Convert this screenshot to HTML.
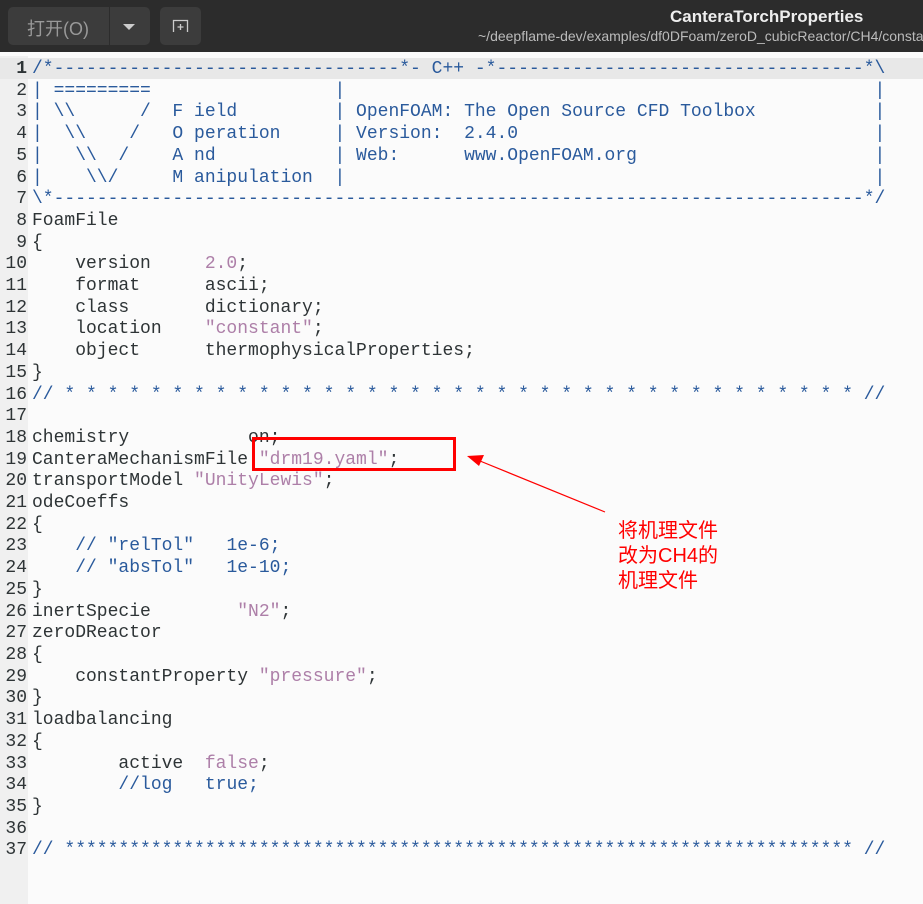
<!DOCTYPE html>
<html><head><meta charset="utf-8"><style>
body{margin:0;width:923px;height:904px;overflow:hidden;background:#fbfbfb;font-family:"Liberation Sans","Noto Sans CJK SC",sans-serif;position:relative}
.top{position:absolute;left:0;top:0;width:923px;height:52px;background:#2c2c2c}
.btn{position:absolute;top:7px;height:38px;background:#3c3c3c;border-radius:5px}
.gut{position:absolute;left:0;top:56px;width:28px;height:848px;background:#f0f0f0}
.hl{position:absolute;left:0;top:58px;width:923px;height:21px;background:#e8e8e8}
pre{position:absolute;margin:0;top:59px;font-family:"Liberation Mono",monospace;font-size:18px;line-height:21.7px;color:#2e3436}
.num{left:0;width:27px;text-align:right;color:#2e3436}
.code{left:32px}
.c{color:#2a5a9c}.s{color:#ad7fa8}
</style></head><body>
<div class="top"></div>
<div class="btn" style="left:8px;width:142px"></div>
<div style="position:absolute;left:109px;top:7px;width:1px;height:38px;background:#2c2c2c"></div>
<div style="position:absolute;left:27px;top:15px;color:#999;font-size:18px">打开(O)</div>
<div style="position:absolute;left:123px;top:24px;width:0;height:0;border-left:6px solid transparent;border-right:6px solid transparent;border-top:6px solid #ccc"></div>
<div class="btn" style="left:160px;width:41px"></div>
<svg style="position:absolute;left:172px;top:18px" width="18" height="16"><path d="M1.5 14V2.5h14V14" fill="none" stroke="#ccc" stroke-width="1.3"/><path d="M8.5 6v6M5.5 9h6" stroke="#ccc" stroke-width="1.3"/></svg>
<div style="position:absolute;left:670px;top:7px;color:#eee;font-weight:bold;font-size:17px;white-space:nowrap">CanteraTorchProperties</div>
<div style="position:absolute;left:478px;top:28px;color:#bbb;font-size:14px;white-space:nowrap">~/deepflame-dev/examples/df0DFoam/zeroD_cubicReactor/CH4/constant</div>
<div class="gut"></div>
<div class="hl"></div>
<pre class="num"><b>1</b>
2
3
4
5
6
7
8
9
10
11
12
13
14
15
16
17
18
19
20
21
22
23
24
25
26
27
28
29
30
31
32
33
34
35
36
37</pre>
<pre class="code"><span class="c">/*--------------------------------*- C++ -*----------------------------------*\
| =========                 |                                                 |
| \\      /  F ield         | OpenFOAM: The Open Source CFD Toolbox           |
|  \\    /   O peration     | Version:  2.4.0                                 |
|   \\  /    A nd           | Web:      www.OpenFOAM.org                      |
|    \\/     M anipulation  |                                                 |
\*---------------------------------------------------------------------------*/</span>
FoamFile
{
    version     <span class="s">2.0</span>;
    format      ascii;
    class       dictionary;
    location    <span class="s">"constant"</span>;
    object      thermophysicalProperties;
}
<span class="c">// * * * * * * * * * * * * * * * * * * * * * * * * * * * * * * * * * * * * * //</span>

chemistry           on;
CanteraMechanismFile <span class="s">"drm19.yaml"</span>;
transportModel <span class="s">"UnityLewis"</span>;
odeCoeffs
{
    <span class="c">// "relTol"   1e-6;</span>
    <span class="c">// "absTol"   1e-10;</span>
}
inertSpecie        <span class="s">"N2"</span>;
zeroDReactor
{
    constantProperty <span class="s">"pressure"</span>;
}
loadbalancing
{
        active  <span class="s">false</span>;
        <span class="c">//log   true;</span>
}

<span class="c">// ************************************************************************* //</span></pre>
<div style="position:absolute;left:252px;top:437px;width:198px;height:28px;border:3px solid #f00"></div>
<svg style="position:absolute;left:0;top:0" width="923" height="904"><line x1="605" y1="512" x2="480" y2="461" stroke="#f00" stroke-width="1.2"/><polygon points="467,456 484,455 479,466" fill="#f00"/></svg>
<div style="position:absolute;left:618px;top:519px;color:#f00;font-size:20px;line-height:25px">将机理文件<br>改为CH4的<br>机理文件</div>
</body></html>
